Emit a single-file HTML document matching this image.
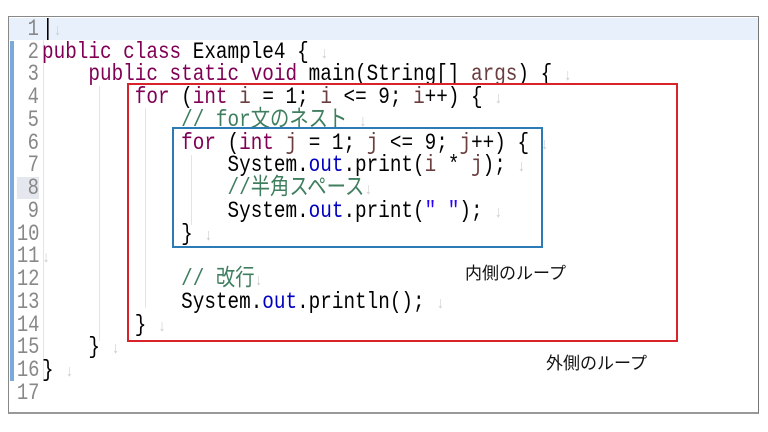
<!DOCTYPE html>
<html><head><meta charset="utf-8"><style>
body{margin:0;width:768px;height:432px;background:#fff;overflow:hidden;position:relative;font-family:"Liberation Mono","Noto Sans CJK JP",monospace}
.frame{position:absolute;left:8px;top:16px;width:751px;height:398px;border:1px solid #888;border-right:1px solid #777;border-bottom:2px solid #999;box-sizing:border-box}
.hl{position:absolute;left:9px;top:18px;width:749px;height:22px;background:#e8f0fb}
.bar{position:absolute;left:10px;top:41px;width:4px;height:340px;background:#7aa9dc}
.ln{position:absolute;left:12px;width:27px;text-align:right;font-size:23px;color:#888;transform:scaleX(.82);transform-origin:right;line-height:22px}
.c{position:absolute;left:42px;font-size:23px;line-height:22px;white-space:pre;transform:scaleX(.84);transform-origin:left;color:#000}
.k{color:#7f0055}.v{color:#6a3e3e}.o{color:#0000c0}.m{color:#3f7f5f}.s{color:#2a00ff}.p{color:#ccc;font-size:16px}
.box{position:absolute;box-sizing:border-box}
.lab{position:absolute;font-family:"Liberation Sans","Noto Sans CJK JP",sans-serif;font-size:17px;color:#111}
.g{position:absolute;width:1px;background:#e4e4e4}
</style></head><body>
<div class="frame"></div>
<div class="hl"></div>
<div class="bar"></div>
<div class="g" style="left:43px;top:40px;height:340px"></div>
<div class="g" style="left:99px;top:86px;height:255px"></div>
<div class="g" style="left:145px;top:108px;height:200px"></div>
<div class="g" style="left:191px;top:155px;height:70px"></div>
<div class="ln" style="top:18px">1</div>
<div class="ln" style="top:41px">2</div>
<div class="ln" style="top:63px">3</div>
<div class="ln" style="top:86px">4</div>
<div class="ln" style="top:109px">5</div>
<div class="ln" style="top:132px">6</div>
<div class="ln" style="top:154px">7</div>
<div class="ln" style="top:177px;background:#e4e8ee">8</div>
<div class="ln" style="top:200px">9</div>
<div class="ln" style="top:223px">10</div>
<div class="ln" style="top:245px">11</div>
<div class="ln" style="top:268px">12</div>
<div class="ln" style="top:291px">13</div>
<div class="ln" style="top:314px">14</div>
<div class="ln" style="top:336px">15</div>
<div class="ln" style="top:359px">16</div>
<div class="ln" style="top:382px">17</div>
<div class="c" style="top:18px">|<span class="p">↓</span></div>
<div class="c" style="top:41px"><span class="k">public class</span> Example4 { <span class="p">↓</span></div>
<div class="c" style="top:63px">    <span class="k">public static void</span> main(String[] <span class="v">args</span>) { <span class="p">↓</span></div>
<div class="c" style="top:86px">        <span class="k">for</span> (<span class="k">int</span> <span class="v">i</span> = 1; <span class="v">i</span> &lt;= 9; <span class="v">i</span>++) { <span class="p">↓</span></div>
<div class="c" style="top:109px">            <span class="m">// for文のネスト</span> <span class="p">↓</span></div>
<div class="c" style="top:132px">            <span class="k">for</span> (<span class="k">int</span> <span class="v">j</span> = 1; <span class="v">j</span> &lt;= 9; <span class="v">j</span>++) { <span class="p">↓</span></div>
<div class="c" style="top:154px">                System.<span class="o">out</span>.print(<span class="v">i</span> * <span class="v">j</span>); <span class="p">↓</span></div>
<div class="c" style="top:177px">                <span class="m">//半角スペース</span><span class="p">↓</span></div>
<div class="c" style="top:200px">                System.<span class="o">out</span>.print(<span class="s">" "</span>); <span class="p">↓</span></div>
<div class="c" style="top:223px">            } <span class="p">↓</span></div>
<div class="c" style="top:245px"><span class="p">↓</span></div>
<div class="c" style="top:268px">            <span class="m">// 改行</span><span class="p">↓</span></div>
<div class="c" style="top:291px">            System.<span class="o">out</span>.println(); <span class="p">↓</span></div>
<div class="c" style="top:314px">        } <span class="p">↓</span></div>
<div class="c" style="top:336px">    } <span class="p">↓</span></div>
<div class="c" style="top:359px">} <span class="p">↓</span></div>
<div class="box" style="left:127px;top:83px;width:551px;height:259px;border:2px solid #d9232a"></div>
<div class="box" style="left:172px;top:127px;width:371px;height:121px;border:2px solid #2c7bb6"></div>
<div class="lab" style="left:465px;top:259px">内側のループ</div>
<div class="lab" style="left:546px;top:349px">外側のループ</div>
</body></html>
